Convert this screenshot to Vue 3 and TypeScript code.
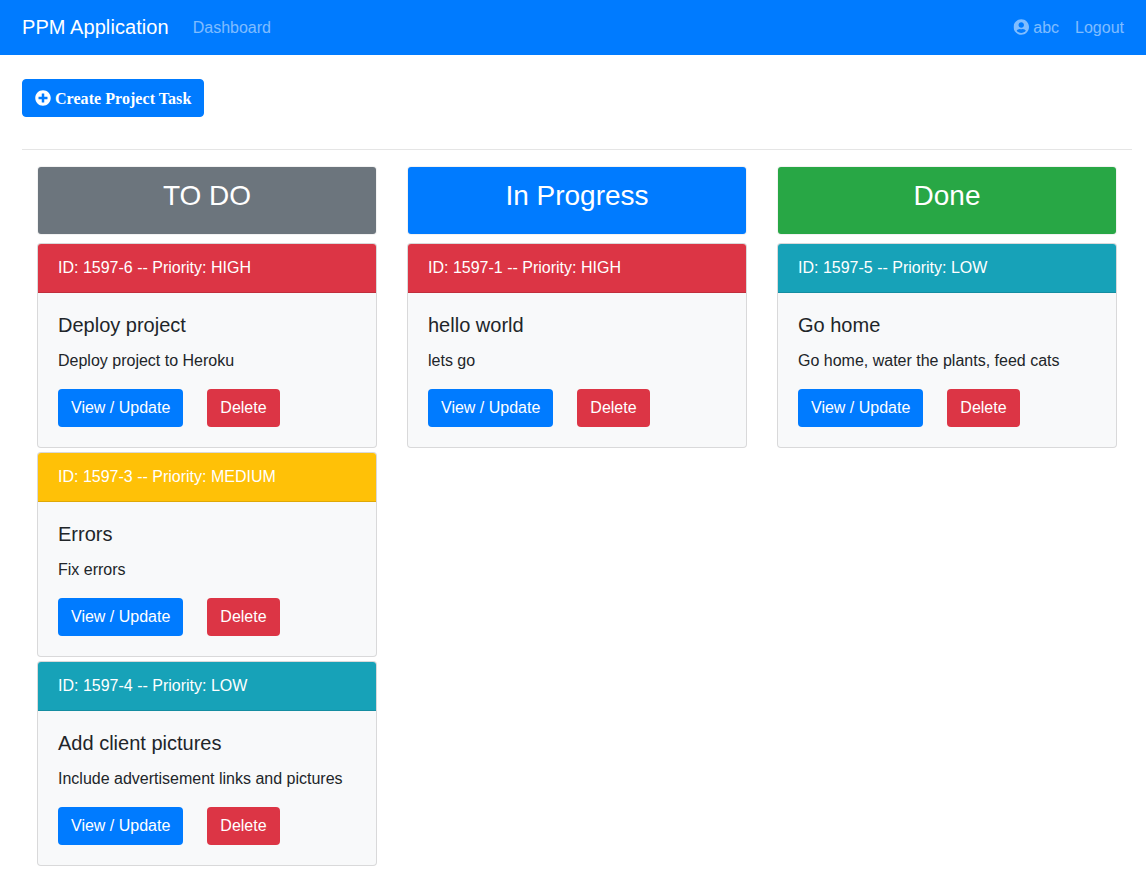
<script setup lang="ts">
interface Task { id: string; priority: string; tone: string; title: string; text: string }
interface Column { name: string; tone: string; tasks: Task[] }

const columns: Column[] = [
  {
    name: 'TO DO',
    tone: 'secondary',
    tasks: [
      { id: '1597-6', priority: 'HIGH', tone: 'danger', title: 'Deploy project', text: 'Deploy project to Heroku' },
      { id: '1597-3', priority: 'MEDIUM', tone: 'warning', title: 'Errors', text: 'Fix errors' },
      { id: '1597-4', priority: 'LOW', tone: 'info', title: 'Add client pictures', text: 'Include advertisement links and pictures' },
    ],
  },
  {
    name: 'In Progress',
    tone: 'primary',
    tasks: [{ id: '1597-1', priority: 'HIGH', tone: 'danger', title: 'hello world', text: 'lets go' }],
  },
  {
    name: 'Done',
    tone: 'success',
    tasks: [{ id: '1597-5', priority: 'LOW', tone: 'info', title: 'Go home', text: 'Go home, water the plants, feed cats' }],
  },
]
</script>

<template>
  <div class="app">
    <nav class="navbar">
      <a class="brand">PPM Application</a>
      <a class="nav-link dash">Dashboard</a>
      <div class="nav-right">
        <a class="nav-link user">
          <svg class="icon user-icon" viewBox="0 0 496 512" aria-hidden="true"><path fill="currentColor" d="M248 8C111 8 0 119 0 256s111 248 248 248 248-111 248-248S385 8 248 8zm0 96c48.6 0 88 39.4 88 88s-39.4 88-88 88-88-39.4-88-88 39.4-88 88-88zm0 344c-58.7 0-111.3-26.6-146.5-68.2 18.8-35.4 55.6-59.8 98.5-59.8 2.4 0 4.8.4 7.1 1.1 13 4.2 26.6 6.9 40.9 6.9 14.3 0 28-2.7 40.9-6.9 2.3-.7 4.7-1.1 7.1-1.1 42.9 0 79.7 24.4 98.5 59.8C359.3 421.4 306.7 448 248 448z" /></svg>
          abc
        </a>
        <a class="nav-link">Logout</a>
      </div>
    </nav>

    <main class="page">
      <a class="create">
        <svg class="icon create-icon" viewBox="0 0 512 512" aria-hidden="true"><path fill="currentColor" d="M256 8C119 8 8 119 8 256s111 248 248 248 248-111 248-248S393 8 256 8zm144 276c0 6.6-5.4 12-12 12h-92v92c0 6.6-5.4 12-12 12h-56c-6.6 0-12-5.4-12-12v-92h-92c-6.6 0-12-5.4-12-12v-56c0-6.6 5.4-12 12-12h92v-92c0-6.6 5.4-12 12-12h56c6.6 0 12 5.4 12 12v92h92c6.6 0 12 5.4 12 12v56z" /></svg>
        <span class="create-label">Create Project Task</span>
      </a>
      <hr class="rule" />
      <div class="board">
        <section v-for="col in columns" :key="col.name" class="column">
          <div class="col-head" :class="col.tone"><h3>{{ col.name }}</h3></div>
          <article v-for="t in col.tasks" :key="t.id" class="task">
            <header class="task-head" :class="t.tone">ID: {{ t.id }} -- Priority: {{ t.priority }}</header>
            <div class="task-body">
              <h5>{{ t.title }}</h5>
              <p>{{ t.text }}</p>
              <div class="actions">
                <a class="btn primary">View / Update</a>
                <button class="btn danger" type="button">Delete</button>
              </div>
            </div>
          </article>
        </section>
      </div>
    </main>
  </div>
</template>

<style>
html, body { margin: 0; background: #fff; }
</style>

<style scoped>
.app {
  font-family: "Liberation Sans", Arial, sans-serif;
  font-size: 16px;
  line-height: 1.5;
  color: #212529;
}
.navbar {
  display: flex;
  align-items: center;
  height: 55px;
  box-sizing: border-box;
  padding: 0 14px 0 22px;
  background: #007bff;
}
.brand {
  font-size: 20px;
  line-height: 30px;
  color: #fff;
  margin: -2px 16px 0 0;
  letter-spacing: 0.07px;
}
.nav-link {
  padding: 8px;
  color: rgba(255, 255, 255, 0.5);
}
.nav-right {
  margin-left: auto;
  display: flex;
}
.icon {
  display: inline-block;
  width: 16px;
  height: 16px;
  vertical-align: -2px;
}
.user-icon {
  width: 15.5px;
  transform: translateX(0.5px);
}
.create-icon {
  transform: translateY(1px);
}
.page {
  padding: 24px 14px 0 22px;
}
.create {
  display: inline-block;
  box-sizing: border-box;
  height: 38px;
  padding: 6px 12px;
  border: 1px solid #007bff;
  border-radius: 4px;
  background: #007bff;
  color: #fff;
  font-family: "Liberation Serif", "Times New Roman", serif;
  font-weight: 700;
  vertical-align: top;
}
.create-label {
  display: inline-block;
  margin-left: 4px;
  letter-spacing: 0.05px;
  transform: translateY(1px);
}
.rule {
  margin: 32px 0 16px;
  border: 0;
  border-top: 1px solid rgba(0, 0, 0, 0.1);
}
.board {
  display: grid;
  grid-template-columns: repeat(3, 1fr);
}
.column {
  padding: 0 15px;
  min-width: 0;
}
.col-head {
  border: 1px solid rgba(0, 0, 0, 0.05);
  border-radius: 4px;
  padding: 12px 16px 21px;
  margin-bottom: 8px;
  text-align: center;
  color: #fff;
  background-clip: padding-box;
}
.col-head h3 {
  margin: 0;
  font-size: 28px;
  font-weight: 500;
  line-height: 1.2;
}
.task {
  margin-bottom: 4px;
  border: 1px solid rgba(0, 0, 0, 0.125);
  border-radius: 4px;
  background: #f8f9fa;
  overflow: hidden;
}
.task-head {
  padding: 12px 20px;
  border-bottom: 1px solid rgba(0, 0, 0, 0.125);
  color: #fff;
}
.task-body {
  padding: 20px;
}
.task-body h5 {
  margin: 0 0 12px;
  font-size: 20px;
  font-weight: 500;
  line-height: 1.2;
}
.task-body p {
  margin: 0 0 16px;
}
.actions {
  display: flex;
  gap: 24px;
}
.btn {
  box-sizing: border-box;
  height: 38px;
  padding: 6px 12px;
  border: 1px solid transparent;
  border-radius: 4px;
  font: inherit;
  line-height: 24px;
  color: #fff;
}
.primary { background-color: #007bff; }
.secondary { background-color: #6c757d; }
.success { background-color: #28a745; }
.danger { background-color: #dc3545; }
.warning { background-color: #ffc107; }
.info { background-color: #17a2b8; }
</style>
